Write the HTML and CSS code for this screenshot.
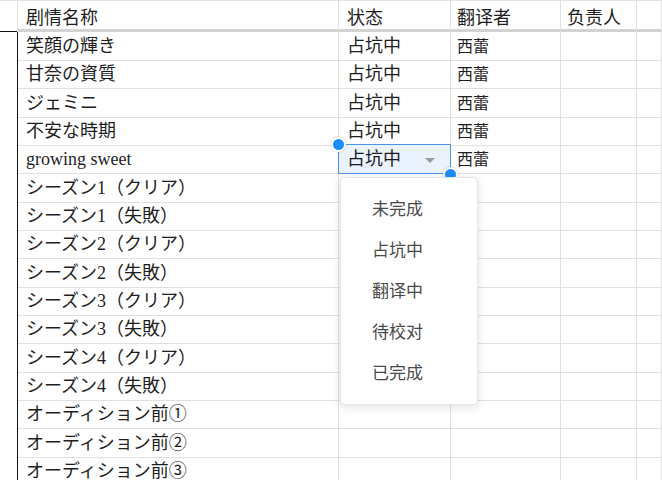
FILE: index.html
```html
<!DOCTYPE html>
<html lang="zh">
<head>
<meta charset="utf-8">
<title>Sheet</title>
<link rel="stylesheet" href="styles.css">
</head>
<body>
<div class="sheet">
  <div class="row header">
    <div class="cell gutter"></div>
    <div class="cell ja">剧情名称</div>
    <div class="cell">状态</div>
    <div class="cell c-narrow">翻译者</div>
    <div class="cell c-narrow">负责人</div>
    <div class="cell"></div>
  </div>
  <div class="freeze"><div class="freeze-gutter"></div><div class="freeze-bar"></div></div>
  <div class="body">
    <div class="row"><div class="cell gutter"></div><div class="cell ja">笑顔の輝き</div><div class="cell">占坑中</div><div class="cell c-narrow trans">西蕾</div><div class="cell"></div><div class="cell"></div></div>
    <div class="row"><div class="cell gutter"></div><div class="cell ja">甘奈の資質</div><div class="cell">占坑中</div><div class="cell c-narrow trans">西蕾</div><div class="cell"></div><div class="cell"></div></div>
    <div class="row"><div class="cell gutter"></div><div class="cell ja">ジェミニ</div><div class="cell">占坑中</div><div class="cell c-narrow trans">西蕾</div><div class="cell"></div><div class="cell"></div></div>
    <div class="row"><div class="cell gutter"></div><div class="cell ja">不安な時期</div><div class="cell">占坑中</div><div class="cell c-narrow trans">西蕾</div><div class="cell"></div><div class="cell"></div></div>
    <div class="row"><div class="cell gutter"></div><div class="cell ja">growing sweet</div><div class="cell selected"><span>占坑中</span><span class="caret"></span><span class="handle h-tl"></span><span class="handle h-br"></span></div><div class="cell c-narrow trans">西蕾</div><div class="cell"></div><div class="cell"></div></div>
    <div class="row"><div class="cell gutter"></div><div class="cell ja">シーズン1（クリア）</div><div class="cell"></div><div class="cell"></div><div class="cell"></div><div class="cell"></div></div>
    <div class="row"><div class="cell gutter"></div><div class="cell ja">シーズン1（失敗）</div><div class="cell"></div><div class="cell"></div><div class="cell"></div><div class="cell"></div></div>
    <div class="row"><div class="cell gutter"></div><div class="cell ja">シーズン2（クリア）</div><div class="cell"></div><div class="cell"></div><div class="cell"></div><div class="cell"></div></div>
    <div class="row"><div class="cell gutter"></div><div class="cell ja">シーズン2（失敗）</div><div class="cell"></div><div class="cell"></div><div class="cell"></div><div class="cell"></div></div>
    <div class="row"><div class="cell gutter"></div><div class="cell ja">シーズン3（クリア）</div><div class="cell"></div><div class="cell"></div><div class="cell"></div><div class="cell"></div></div>
    <div class="row"><div class="cell gutter"></div><div class="cell ja">シーズン3（失敗）</div><div class="cell"></div><div class="cell"></div><div class="cell"></div><div class="cell"></div></div>
    <div class="row"><div class="cell gutter"></div><div class="cell ja">シーズン4（クリア）</div><div class="cell"></div><div class="cell"></div><div class="cell"></div><div class="cell"></div></div>
    <div class="row"><div class="cell gutter"></div><div class="cell ja">シーズン4（失敗）</div><div class="cell"></div><div class="cell"></div><div class="cell"></div><div class="cell"></div></div>
    <div class="row"><div class="cell gutter"></div><div class="cell ja">オーディション前①</div><div class="cell"></div><div class="cell"></div><div class="cell"></div><div class="cell"></div></div>
    <div class="row"><div class="cell gutter"></div><div class="cell ja">オーディション前②</div><div class="cell"></div><div class="cell"></div><div class="cell"></div><div class="cell"></div></div>
    <div class="row"><div class="cell gutter"></div><div class="cell ja">オーディション前③</div><div class="cell"></div><div class="cell"></div><div class="cell"></div><div class="cell"></div></div>
  </div>
  <ul class="menu">
    <li>未完成</li>
    <li>占坑中</li>
    <li>翻译中</li>
    <li>待校对</li>
    <li>已完成</li>
  </ul>
</div>
</body>
</html>
```

FILE: styles.css
```css
* { box-sizing: border-box; }
html, body {
  margin: 0;
  padding: 0;
  background: #ffffff;
}
body {
  width: 662px;
  height: 480px;
  overflow: hidden;
  font-family: "Liberation Serif", "Noto Sans CJK SC", serif;
  color: #1e1e1e;
}
.sheet {
  position: relative;
  width: 662px;
}
.row {
  display: grid;
  grid-template-columns: 18px 321px 112px 110px 76px 1fr;
  height: 28.35px;
}
.header.row {
  border-top: 1px solid #e2e2e2;
  height: 29px;
}
.cell {
  position: relative;
  border-right: 1px solid #e0e0e0;
  border-bottom: 1px solid #e0e0e0;
  padding-left: 8px;
  padding-top: 1px;
  font-size: 18px;
  line-height: 27px;
  white-space: nowrap;
  display: flex;
  align-items: center;
}
.header .cell {
  border-bottom: none;
  padding-top: 4px;
}
.ja {
  font-family: "Liberation Serif", "Noto Sans CJK JP", serif;
}
.c-narrow { padding-left: 6px; }
.trans { font-size: 16px; }
.gutter {
  padding: 0;
  border-bottom: none;
}
.body .gutter {
  border-right: 1.5px solid #111;
}
.freeze {
  display: grid;
  grid-template-columns: 18px 1fr;
  height: 3px;
}
.freeze-gutter {
  border-bottom: 1.5px solid #111;
  border-right: 1.5px solid #111;
  height: 3px;
}
.freeze-bar {
  background: #d2d2d2;
}
.selected {
  background: #e9f2fd;
  border: 1.5px solid #4a94e8;
  margin-left: -1px;
  margin-top: -1px;
  height: calc(100% + 1px);
  padding-left: 8px;
  color: #1a1a1a;
}
.caret {
  position: absolute;
  right: 15px;
  top: 13px;
  width: 0;
  height: 0;
  border-left: 5px solid transparent;
  border-right: 5px solid transparent;
  border-top: 5px solid #9a9a9a;
}
.handle {
  position: absolute;
  width: 15px;
  height: 15px;
  border-radius: 50%;
  background: #1a8cff;
  border: 2.5px solid #ffffff;
  box-shadow: 0 0 2px rgba(0,0,0,0.25);
  z-index: 3;
}
.h-tl { left: -8px; top: -8px; }
.h-br { right: -8px; bottom: -9px; }
.menu {
  position: absolute;
  left: 340px;
  top: 177px;
  width: 138px;
  margin: 0;
  padding: 9px 0 12px;
  list-style: none;
  background: #ffffff;
  border: 1px solid #e6e6e6;
  border-radius: 4px;
  box-shadow: 0 2px 10px rgba(0,0,0,0.12);
  z-index: 5;
}
.menu li {
  height: 41px;
  line-height: 41px;
  padding-left: 31px;
  font-family: "Noto Sans CJK SC", sans-serif;
  font-size: 17px;
  color: #4a4a4a;
}
```
